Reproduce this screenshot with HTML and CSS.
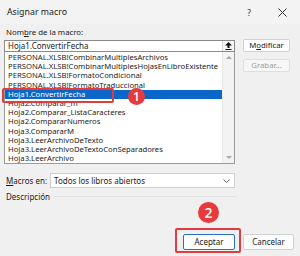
FILE: index.html
```html
<!DOCTYPE html>
<html>
<head>
<meta charset="utf-8">
<link rel="stylesheet" href="styles.css">
</head>
<body>
<div class="dialog">
  <div class="titlebar">
    <span class="title">Asignar macro</span>
    <span class="help">?</span>
    <span class="close"><svg width="9" height="9" viewBox="0 0 9 9"><path d="M0.5 0.5L8.5 8.5M8.5 0.5L0.5 8.5" stroke="#333" stroke-width="1"/></svg></span>
  </div>
  <div class="content">
    <div class="top">
      <div class="left">
        <div class="label">Nom<u>b</u>re de la macro:</div>
        <div class="input">
          <span class="input-text">Hoja1.ConvertirFecha</span>
          <span class="ibtn"><svg width="7" height="8" viewBox="0 0 7 8"><path d="M3.5 0L7 3.5H4.5V6H2.5V3.5H0Z" fill="#111"/><rect x="0.5" y="7" width="6" height="1" fill="#111"/></svg></span>
        </div>
        <div class="list">
          <div class="items">
            <div class="item">PERSONAL.XLSB!CombinarMultiplesArchivos</div>
            <div class="item">PERSONAL.XLSB!CombinarMultiplesHojasEnLibroExistente</div>
            <div class="item">PERSONAL.XLSB!FormatoCondicional</div>
            <div class="item">PERSONAL.XLSB!FormatoTraduccional</div>
            <div class="item sel">Hoja1.ConvertirFecha</div>
            <div class="item">Hoja2.Comparar_m</div>
            <div class="item">Hoja2.Comparar_ListaCaracteres</div>
            <div class="item">Hoja2.CompararNumeros</div>
            <div class="item">Hoja3.CompararM</div>
            <div class="item">Hoja3.LeerArchivoDeTexto</div>
            <div class="item">Hoja3.LeerArchivoDeTextoConSeparadores</div>
            <div class="item">Hoja3.LeerArchivo</div>
          </div>
          <div class="scroll">
            <span class="arrow up"></span>
            <span class="arrow down"></span>
          </div>
        </div>
      </div>
      <div class="right">
        <div class="btn">M<u>o</u>dificar</div>
        <div class="btn disabled">Grabar...</div>
      </div>
    </div>
    <div class="macros-row">
      <span class="mlabel"><u>M</u>acros en:</span>
      <div class="select">
        <span>Todos los libros abiertos</span>
        <svg width="7" height="4" viewBox="0 0 7 4"><path d="M0.5 0.5L3.5 3.5L6.5 0.5" stroke="#555" fill="none" stroke-width="0.9"/></svg>
      </div>
    </div>
    <div class="desc">
      <span>Descripción</span>
      <span class="rule"></span>
    </div>
    <div class="footer">
      <div class="fbtn default">Aceptar</div>
      <div class="fbtn">Cancelar</div>
    </div>
  </div>
  <div class="mark box1"></div>
  <div class="badge b1">1</div>
  <div class="badge b2">2</div>
  <div class="mark box2"></div>
</div>
</body>
</html>
```

FILE: styles.css
```css
* { box-sizing: border-box; }
html, body { margin: 0; padding: 0; }
body {
  width: 300px;
  height: 256px;
  overflow: hidden;
  font-family: "Noto Sans", "Open Sans", sans-serif;
  font-size: 8px;
  color: #1b1b1b;
  background: #f0f0f0;
}
.dialog {
  position: relative;
  width: 300px;
  height: 256px;
  background: #f0f0f0;
}
.titlebar {
  height: 24px;
  display: flex;
  align-items: center;
  padding: 0 0 0 7px;
  background: #f3f3f3;
}
.title {
  flex: 1;
  font-size: 8.8px;
  color: #1b1b1b;
}
.help {
  width: 12px;
  text-align: center;
  font-size: 8.5px;
  color: #333;
  margin-right: 21px;
}
.close {
  width: 12px;
  margin-right: 12px;
  display: flex;
  justify-content: center;
}
.content {
  padding: 0 0 0 4px;
}
.top {
  display: flex;
  align-items: flex-start;
}
.left {
  width: 231px;
}
.label {
  height: 16px;
  padding: 3px 0 0 2px;
  line-height: 10px;
  font-size: 7.8px;
}
u { text-decoration-thickness: 0.7px; text-underline-offset: 1px; }
.input {
  height: 12px;
  background: #fff;
  border: 1px solid #8a8a8a;
  display: flex;
  align-items: center;
}
.input-text {
  flex: 1;
  padding-left: 3px;
  line-height: 10px;
}
.ibtn {
  width: 11px;
  height: 10px;
  display: flex;
  align-items: center;
  justify-content: center;
  background: #f4f4f4;
  border-left: 1px solid #d6d6d6;
  margin-right: 1px;
}
.list {
  height: 112px;
  background: #fff;
  border: 1px solid #9a9a9a;
  border-top: none;
  display: flex;
}
.items {
  flex: 1;
  padding-top: 1px;
  min-width: 0;
}
.item {
  height: 9.2px;
  line-height: 9.2px;
  font-size: 7.7px;
  padding-left: 3px;
  white-space: nowrap;
  overflow: hidden;
}
.item.sel {
  background: #0a67c9;
  color: #fff;
}
.scroll {
  width: 12px;
  background: #f3f3f3;
  border-left: 1px solid #e8e8e8;
  display: flex;
  flex-direction: column;
  justify-content: space-between;
  align-items: center;
  padding: 4px 0 4px;
}
.arrow {
  width: 0;
  height: 0;
  border-left: 3px solid transparent;
  border-right: 3px solid transparent;
}
.arrow.up { border-bottom: 3px solid #a8a8a8; }
.arrow.down { border-top: 3px solid #a8a8a8; }
.right {
  margin-left: 8px;
  padding-top: 15px;
  display: flex;
  flex-direction: column;
  gap: 7px;
}
.btn {
  width: 47px;
  height: 13px;
  border: 1px solid #d3d3d3;
  border-radius: 2px;
  background: #fdfdfd;
  text-align: center;
  line-height: 11px;
  font-size: 7.8px;
}
.btn.disabled { color: #9d9d9d; background: #f7f7f7; border-color: #dedede; }
.macros-row {
  display: flex;
  align-items: center;
  margin-top: 9px;
  height: 15px;
}
.mlabel {
  width: 46px;
  padding-left: 2px;
}
.select {
  width: 185px;
  height: 15px;
  background: #fff;
  border: 1px solid #cfcfcf;
  display: flex;
  align-items: center;
  justify-content: space-between;
  padding: 0 4px 0 3px;
}
.desc {
  display: flex;
  align-items: center;
  margin-top: 2px;
  height: 12px;
  padding-left: 2px;
}
.rule {
  width: 183px;
  height: 1px;
  background: #e0e0e0;
  margin-left: 4px;
}
.footer {
  display: flex;
  justify-content: flex-end;
  gap: 8px;
  margin-top: 32px;
  padding-right: 6px;
}
.fbtn {
  width: 51px;
  height: 16px;
  border: 1px solid #d0d0d0;
  border-radius: 2px;
  background: #fdfdfd;
  text-align: center;
  line-height: 14px;
}
.fbtn.default {
  width: 52px;
  border: 1px solid #2a6fc0;
}
.mark {
  position: absolute;
  border: 2px solid #e23c3e;
  border-radius: 2px;
}
.box1 { left: 2px; top: 88px; width: 112px; height: 15px; }
.box2 { left: 175px; top: 228px; width: 66px; height: 25px; }
.badge {
  position: absolute;
  border-radius: 50%;
  background: #e63a3d;
  color: #fff;
  font-family: "Open Sans", sans-serif;
  font-weight: 600;
  display: flex;
  align-items: center;
  justify-content: center;
}
.b1 { left: 128px; top: 88px; width: 17px; height: 17px; font-size: 12px; }
.b2 { left: 198px; top: 202px; width: 21px; height: 21px; font-size: 14px; }
```
